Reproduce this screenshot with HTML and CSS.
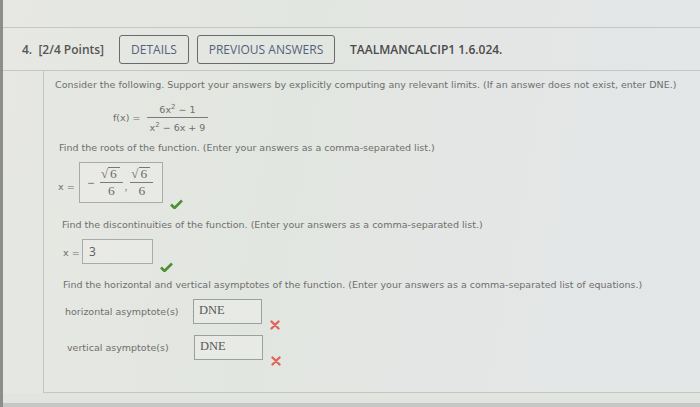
FILE: index.html
```html
<!DOCTYPE html>
<html>
<head>
<meta charset="utf-8">
<link rel="stylesheet" href="styles.css">
</head>
<body>
<div class="screen">
  <div class="topband"></div>
  <div class="header">
    <span class="qnum">4.&nbsp; [2/4 Points]</span>
    <span class="btn btn-details">DETAILS</span>
    <span class="btn btn-prev">PREVIOUS ANSWERS</span>
    <span class="ref">TAALMANCALCIP1 1.6.024.</span>
  </div>
  <div class="qbody">
    <p class="txt t1">Consider the following. Support your answers by explicitly computing any relevant limits. (If an answer does not exist, enter DNE.)</p>
    <div class="formula">
      <span class="fx">f(x) =</span>
      <span class="frac">
        <span class="num">6x<sup>2</sup> − 1</span>
        <span class="den">x<sup>2</sup> − 6x + 9</span>
      </span>
    </div>
    <p class="txt t2">Find the roots of the function. (Enter your answers as a comma-separated list.)</p>
    <div class="row roots">
      <span class="lbl lbl-roots">x =</span>
      <span class="box box-roots">
        <span class="minus">−</span>
        <span class="sfrac"><span class="snum"><span class="rad">√</span><span class="radicand">6</span></span><span class="sden">6</span></span>
        <span class="comma">,</span>
        <span class="sfrac"><span class="snum"><span class="rad">√</span><span class="radicand">6</span></span><span class="sden">6</span></span>
      </span>
      <svg class="check c1" width="13" height="10" viewBox="0 0 13 10"><path d="M1 5.5 L4.5 9 L12 1.5" fill="none" stroke="#4f8f36" stroke-width="2.6" stroke-linejoin="round"/></svg>
    </div>
    <p class="txt t3">Find the discontinuities of the function. (Enter your answers as a comma-separated list.)</p>
    <div class="row disc">
      <span class="lbl lbl-disc">x =</span>
      <span class="box box-disc">3</span>
      <svg class="check c2" width="13" height="10" viewBox="0 0 13 10"><path d="M1 5.5 L4.5 9 L12 1.5" fill="none" stroke="#4f8f36" stroke-width="2.6" stroke-linejoin="round"/></svg>
    </div>
    <p class="txt t4">Find the horizontal and vertical asymptotes of the function. (Enter your answers as a comma-separated list of equations.)</p>
    <div class="row asym ha">
      <span class="alabel">horizontal asymptote(s)</span>
      <span class="box box-dne">DNE</span>
      <svg class="cross" width="10" height="10" viewBox="0 0 10 10"><path d="M1.5 1.5 L8.5 8.5 M8.5 1.5 L1.5 8.5" stroke="#e0665c" stroke-width="2.4" stroke-linecap="round"/></svg>
    </div>
    <div class="row asym va">
      <span class="alabel">vertical asymptote(s)</span>
      <span class="box box-dne">DNE</span>
      <svg class="cross" width="10" height="10" viewBox="0 0 10 10"><path d="M1.5 1.5 L8.5 8.5 M8.5 1.5 L1.5 8.5" stroke="#e0665c" stroke-width="2.4" stroke-linecap="round"/></svg>
    </div>
  </div>
  <div class="bottomband"></div>
</div>
</body>
</html>
```

FILE: styles.css
```css
html, body {
  margin: 0;
  padding: 0;
}
body {
  width: 700px;
  height: 407px;
  overflow: hidden;
  background: #e4e7e2;
}
.screen {
  height: 407px;
  border-left: 3px solid #8c8e8b;
  box-sizing: border-box;
  background: linear-gradient(100deg, #e7e8e3 0%, #e2e6e0 40%, #e4e6e6 70%, #e3e7e7 100%);
}
.topband {
  height: 27px;
  border-bottom: 1px solid #c6c7c3;
}
.header {
  height: 42px;
  border-bottom: 1px solid #c6c7c3;
  display: flex;
  align-items: center;
  padding-left: 19px;
  font-family: "Open Sans", "Liberation Sans", sans-serif;
  font-size: 12px;
}
.qnum {
  font-weight: 600;
  color: #555;
  width: 97px;
}
.btn {
  box-sizing: border-box;
  height: 29px;
  border: 1.5px solid #686a6c;
  border-radius: 3px;
  display: flex;
  align-items: center;
  justify-content: center;
  color: #55607a;
  font-weight: 400;
}
.btn-details {
  width: 70px;
}
.btn-prev {
  width: 138px;
  margin-left: 8px;
}
.ref {
  margin-left: 15px;
  font-weight: 600;
  color: #4a4a4a;
}
.qbody {
  margin-left: 40px;
  height: 322px;
  box-sizing: border-box;
  border-left: 1px solid #c4c6c2;
  border-bottom: 1px solid #c4c6c2;
  padding-left: 11px;
  font-family: "DejaVu Sans", Verdana, sans-serif;
  font-size: 9.5px;
  color: #6e6e6e;
}
.txt {
  margin: 0;
  line-height: 12px;
  white-space: nowrap;
}
.t1 { padding-top: 8px; }
.formula {
  display: flex;
  align-items: center;
  margin-left: 58px;
  margin-top: 10px;
  height: 35px;
}
.fx {
  margin-right: 7px;
  margin-top: -3px;
}
.frac {
  display: flex;
  flex-direction: column;
  align-items: center;
}
.num {
  padding: 0 12px 2px;
  border-bottom: 1px solid #7a7a7a;
  line-height: 11px;
}
.den {
  padding: 4px 2px 0;
  line-height: 11px;
}
sup {
  font-size: 7px;
  line-height: 0;
  vertical-align: 4px;
}
.t2 { margin-top: 6px; padding-left: 4px; }
.row {
  display: flex;
  align-items: center;
  position: relative;
}
.lbl {
  position: relative;
  top: 4px;
}
.lbl-roots { width: 21px; }
.lbl-disc { width: 19px; top: 1px; }
.roots {
  margin-top: 8px;
  height: 41px;
  padding-left: 3px;
}
.box {
  box-sizing: border-box;
  border: 1px solid #a9aba8;
  background: rgba(240, 242, 238, 0.35);
  display: flex;
  align-items: center;
}
.box-roots {
  width: 84px;
  height: 41px;
  padding-left: 7px;
  font-family: "Liberation Serif", "DejaVu Serif", serif;
  font-size: 13.5px;
  color: #6a6a6a;
}
.minus {
  font-family: "DejaVu Sans", sans-serif;
  font-size: 9.5px;
  margin-right: 5px;
}
.sfrac {
  display: inline-flex;
  flex-direction: column;
  align-items: center;
}
.snum {
  display: flex;
  align-items: flex-end;
  padding: 0 3px 2px 1px;
  border-bottom: 1px solid #7a7a7a;
  line-height: 13px;
}
.rad {
  font-size: 13px;
}
.radicand {
  border-top: 1px solid #777;
  padding: 0 3px 0 2px;
  line-height: 12px;
}
.sden {
  line-height: 14px;
  padding-top: 1px;
}
.comma {
  margin: 8px 3px 0 2px;
  font-size: 10px;
}
.check {
  position: relative;
}
.c1 { margin-left: 7px; top: 21px; }
.t3 { margin-top: 16px; padding-left: 7px; }
.disc {
  margin-top: 8px;
  height: 25px;
  padding-left: 8px;
}
.box-disc {
  width: 71px;
  height: 25px;
  padding-left: 6px;
  font-family: "Open Sans", "DejaVu Sans", sans-serif;
  font-size: 12px;
  color: #5c5c5c;
}
.c2 { margin-left: 7px; top: 15px; }
.t4 { margin-top: 15px; padding-left: 8px; }
.asym {
  height: 25px;
  padding-left: 10px;
}
.ha { margin-top: 8px; }
.va { margin-top: 11px; padding-left: 12px; }
.alabel {
  width: 128px;
}
.va .alabel { width: 127px; }
.box-dne {
  width: 69px;
  height: 25px;
  padding-left: 5px;
  padding-bottom: 3px;
  font-family: "Liberation Serif", "DejaVu Serif", serif;
  font-size: 12.5px;
  color: #5a5a5a;
  border-color: #9d9f9c;
}
.cross {
  position: relative;
  margin-left: 8px;
  top: 13px;
}
.bottomband {
  height: 15px;
  border-top: 10px solid #e2e4e0;
  box-sizing: border-box;
  background: #c4c7c3;
}
```
